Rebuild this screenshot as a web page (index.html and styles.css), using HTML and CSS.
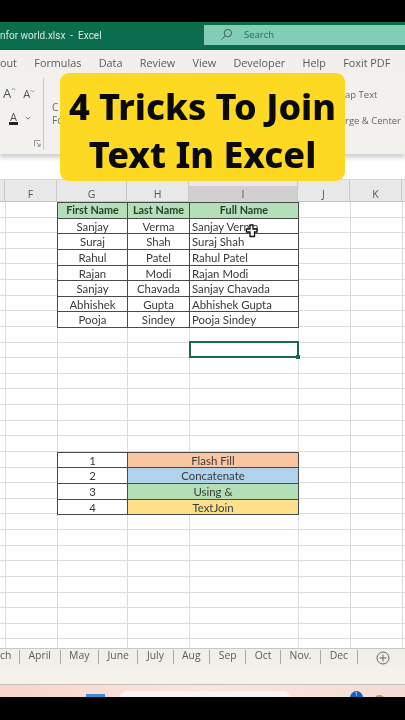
FILE: index.html
```html
<!DOCTYPE html>
<html lang="en">
<head>
<meta charset="utf-8">
<title>Excel</title>
<link rel="stylesheet" href="styles.css">
</head>
<body>
<div class="frame">
  <div class="black-top"></div>
  <header class="titlebar">
    <div class="doc-title">nfor world.xlsx &nbsp;- &nbsp;Excel</div>
    <div class="search">
      <svg class="search-icon" viewBox="0 0 14 14"><circle cx="8.5" cy="5.5" r="4" fill="none" stroke="#2f5f50" stroke-width="1"/><path d="M5.6 8.4 1.5 12.5" stroke="#2f5f50" stroke-width="1"/></svg>
      <span>Search</span>
    </div>
  </header>
  <nav class="tabs">
    <span>out</span><span>Formulas</span><span>Data</span><span>Review</span><span>View</span><span>Developer</span><span>Help</span><span>Foxit PDF</span>
  </nav>
  <section class="ribbon">
    <div class="font-group">
      <div class="font-row">
        <span class="big-a">A<svg viewBox="0 0 6 4"><path d="M.7 3.3 3 1l2.3 2.3" fill="none" stroke="#4a89b8" stroke-width=".9"/></svg></span>
        <span class="small-a">A<svg viewBox="0 0 6 4"><path d="M.7 1 3 3.3 5.3 1" fill="none" stroke="#4a89b8" stroke-width=".9"/></svg></span>
      </div>
      <div class="font-row color-row">
        <span class="color-a">A</span>
        <svg class="chev" viewBox="0 0 8 5"><path d="M1 1l3 3 3-3" fill="none" stroke="#555" stroke-width="1"/></svg>
      </div>
      <svg class="launcher" viewBox="0 0 8 8"><path d="M.5 7V.5H7M3 3l4 4M7 4v3H4" fill="none" stroke="#666" stroke-width=".8"/></svg>
    </div>
    <div class="cond-group"><span>C</span><span>Fo</span></div>
    <div class="wrap-group"><span>ap Text</span><span>rge &amp; Center</span></div>
  </section>
  <div class="formula-bar"></div>
  <div class="col-heads">
    <span class="ch-0"></span><span class="ch-f">F</span><span class="ch-g">G</span><span class="ch-h">H</span><span class="ch-i">I</span><span class="ch-j">J</span><span class="ch-k">K</span>
  </div>
  <main class="sheet">
    <div class="names">
      <div class="hd">First Name</div><div class="hd">Last Name</div><div class="hd">Full Name</div>
      <div>Sanjay</div><div>Verma</div><div class="l">Sanjay Verma</div>
      <div>Suraj</div><div>Shah</div><div class="l">Suraj Shah</div>
      <div>Rahul</div><div>Patel</div><div class="l">Rahul Patel</div>
      <div>Rajan</div><div>Modi</div><div class="l">Rajan Modi</div>
      <div>Sanjay</div><div>Chavada</div><div class="l">Sanjay Chavada</div>
      <div>Abhishek</div><div>Gupta</div><div class="l">Abhishek Gupta</div>
      <div>Pooja</div><div>Sindey</div><div class="l">Pooja Sindey</div>
    </div>
    <div class="selected"><i></i></div>
    <div class="tricks">
      <div>1</div><div class="c1">Flash Fill</div>
      <div>2</div><div class="c2">Concatenate</div>
      <div>3</div><div class="c3">Using &amp;</div>
      <div>4</div><div class="c4">TextJoin</div>
    </div>
    <svg class="cursor" viewBox="0 0 14 14"><path d="M5 1h3v4h4v3H9.500v4.500H5V8H1.500V5H5z" fill="#fff" stroke="#111" stroke-width="1.300"/></svg>
  </main>
  <footer class="sheet-tabs">
    <span class="t-ch">ch</span><span>April</span><span>May</span><span>June</span><span>July</span><span>Aug</span><span>Sep</span><span>Oct</span><span>Nov.</span><span>Dec</span>
    <svg class="add" viewBox="0 0 14 14"><circle cx="7" cy="7" r="6" fill="none" stroke="#666" stroke-width="1"/><path d="M7 3.500v7M3.500 7h7" stroke="#666" stroke-width="1"/></svg>
  </footer>
  <div class="status"></div>
  <div class="taskbar">
    <div class="win"></div>
    <div class="pill"></div>
    <div class="badge">1</div>
    <div class="brown"></div>
  </div>
  <div class="black-bottom"></div>
  <aside class="banner">
    <div>4 Tricks To Join</div>
    <div>Text In Excel</div>
  </aside>
</div>
</body>
</html>
```
FILE: styles.css
```css
* { box-sizing: border-box; }
html, body { margin: 0; padding: 0; background: #000; }
.frame {
  position: relative;
  width: 405px;
  height: 720px;
  overflow: hidden;
  display: flex;
  flex-direction: column;
  font-family: "Open Sans", "Noto Sans", sans-serif;
  background: #fff;
  filter: blur(.3px);
}
.black-top { height: 22px; background: #000; flex: none; }
.titlebar {
  height: 28px;
  flex: none;
  background: #0b6c4e;
  border-bottom: 1px solid #0a6448;
  display: flex;
  align-items: center;
  color: #d3ebe0;
  font-family: Roboto, sans-serif;
  font-size: 10px;
  justify-content: space-between;
}
.doc-title { margin-top: -1px; white-space: nowrap; }
.search {
  width: 201px;
  height: 20px;
  margin-top: -2px;
  background: #82cdb6;
  display: flex;
  align-items: center;
  padding-left: 16px;
  gap: 11px;
  color: #2f6a58;
  font-family: "Open Sans", sans-serif;
  font-size: 9.500px;
}
.search-icon { width: 13px; height: 13px; }
.tabs {
  height: 24px;
  flex: none;
  background: #f2f0ec;
  display: flex;
  gap: 17.400px;
  align-items: center;
  font-size: 10.800px;
  color: #5a5a5a;
  white-space: nowrap;
}
.ribbon {
  height: 80px;
  flex: none;
  background: #f3f1ed;
  display: flex;
  color: #666;
  font-size: 10px;
  box-shadow: 0 4px 4px #d4d4d4;
  position: relative;
}
.font-group {
  position: relative;
  width: 44px;
  height: 72px;
  margin-top: 4px;
  border-right: 1px solid #c8c8c6;
  padding: 4px 0 0 3px;
}
.font-row { display: flex; align-items: center; gap: 6px; height: 22px; }
.big-a { font-size: 13px; color: #555; display: flex; align-items: flex-start; }
.small-a { font-size: 11px; color: #555; margin-left: 1px; display: flex; align-items: flex-start; }
.big-a svg, .small-a svg { width: 5px; height: 4px; margin-top: 3px; }
.color-row { margin-top: 3px; padding-left: 6px; gap: 7px; }
.color-a {
  font-size: 11px;
  line-height: 11px;
  color: #555;
  border-bottom: 3px solid #222;
  padding: 0 1px;
}
.chev { width: 6px; height: 4px; }
.launcher { position: absolute; left: 34px; top: 62px; width: 7px; height: 7px; }
.cond-group {
  display: flex;
  flex-direction: column;
  margin: 27px 0 0 8px;
  line-height: 13px;
  font-size: 10px;
  align-items: flex-start;
  width: 8px;
}
.wrap-group {
  margin-left: auto;
  width: 60px;
  padding-top: 13px;
  display: flex;
  flex-direction: column;
  gap: 10px;
  font-size: 9.500px;
  line-height: 16px;
  white-space: nowrap;
}
.formula-bar { height: 26px; flex: none; background: #fff; border-bottom: 1px solid #d8d8d8; }
.col-heads {
  height: 22px;
  flex: none;
  display: grid;
  grid-template-columns: 5px 52px 70px 62px 109px 52px 52px;
  background: #e8e8e8;
  border-bottom: 1px solid #c4c4c4;
  font-size: 10.500px;
  color: #555;
  text-align: center;
  line-height: 28px;
}
.col-heads span { border-right: 1px solid #c9c9c9; height: 100%; }
.ch-i { background: linear-gradient(#e8e8e8 6px, #d2d0ce 6px); }
.sheet {
  position: relative;
  height: 446px;
  flex: none;
  padding-left: 57px;
  background-color: #fff;
  background-image:
    repeating-linear-gradient(to bottom, transparent 0 14.625px, #dcdcdc 14.625px 15.625px),
    linear-gradient(to right,
      transparent 5px, #dcdcdc 5px 6px,
      transparent 6px 57px, #dcdcdc 57px 58px,
      transparent 58px 127px, #dcdcdc 127px 128px,
      transparent 128px 189px, #dcdcdc 189px 190px,
      transparent 190px 298px, #dcdcdc 298px 299px,
      transparent 299px 350px, #dcdcdc 350px 351px,
      transparent 351px 402px, #dcdcdc 402px 403px,
      transparent 403px);
  font-family: Lato, "Open Sans", sans-serif;
  font-size: 11.400px;
  color: #3a3a3a;
}
.names, .tricks {
  display: grid;
  grid-auto-rows: 15.625px;
  width: 242px;
  border-top: 1px solid #4a4a4a;
  border-left: 1px solid #4a4a4a;
  background: #fff;
}
.names { grid-template-columns: 70px 62px 109px; }
.tricks { grid-template-columns: 70px 171px; margin-top: 93.750px; }
.names div, .tricks div {
  border-right: 1px solid #4a4a4a;
  border-bottom: 1px solid #4a4a4a;
  text-align: center;
  line-height: 15.500px;
  white-space: nowrap;
}
.names .hd { background: #b5dfb9; font-weight: 700; color: #263f2c; font-size: 10.800px; line-height: 14.500px; }
.names .l { text-align: left; padding-left: 2px; }
.selected {
  position: relative;
  width: 110px;
  height: 17px;
  margin: 13px 0 0 132px;
  border: 2px solid #1d6a4a;
  background: #fff;
}
.selected i {
  position: absolute;
  right: -3px;
  bottom: -3px;
  width: 4px;
  height: 4px;
  background: #1d6a4a;
}
.tricks .c1 { background: #fac6a2; }
.tricks .c2 { background: #b0d3ec; }
.tricks .c3 { background: #b4deb6; }
.tricks .c4 { background: #fde08b; }
.cursor { position: absolute; left: 245px; top: 22px; width: 14px; height: 14px; }
.sheet-tabs {
  height: 19px;
  flex: none;
  display: flex;
  background: #f1efea;
  border-top: 1px solid #c8c8c8;
  font-size: 10.400px;
  color: #5c5c5c;
  position: relative;
  line-height: 11px;
}
.sheet-tabs span {
  height: 14px;
  padding: 0 8.550px;
  border-right: 1px solid #aaa;
  margin-top: 1px;
  white-space: nowrap;
}
.sheet-tabs .t-ch { width: 20px; padding: 0; }
.add { position: absolute; left: 376px; top: 2px; width: 14px; height: 14px; }
.status { height: 18px; flex: none; background: #f4f2ea; border-bottom: 1px solid #c5bfbc; }
.taskbar {
  position: relative;
  height: 12px;
  flex: none;
  background: linear-gradient(to right, #f7d4cb, #fbe6dc 50%, #f3dcd3);
  overflow: hidden;
}
.win { position: absolute; left: 86px; top: 9px; width: 19px; height: 3px; background: #3d8fcf; }
.pill { position: absolute; left: 120px; top: 6px; width: 170px; height: 14px; border-radius: 7px; background: #f9f4f2; }
.badge {
  position: absolute;
  left: 350px;
  top: 6px;
  width: 13px;
  height: 13px;
  border-radius: 50%;
  background: #1662c0;
  color: #fff;
  font-size: 5px;
  line-height: 6px;
  text-align: center;
}
.brown { position: absolute; left: 375px; top: 10px; width: 9px; height: 7px; border-radius: 4px 4px 0 0; background: #c49a78; }
.black-bottom { flex: 1; background: #000; }
.banner {
  position: absolute;
  left: 60px;
  top: 73px;
  width: 285px;
  height: 108px;
  border-radius: 9px;
  background: #fdd923;
  color: #0a0a0a;
  font-family: "Noto Sans", sans-serif;
  font-weight: 800;
  font-size: 36px;
  line-height: 48px;
  text-align: center;
  padding-top: 10px;
  white-space: nowrap;
}
```
